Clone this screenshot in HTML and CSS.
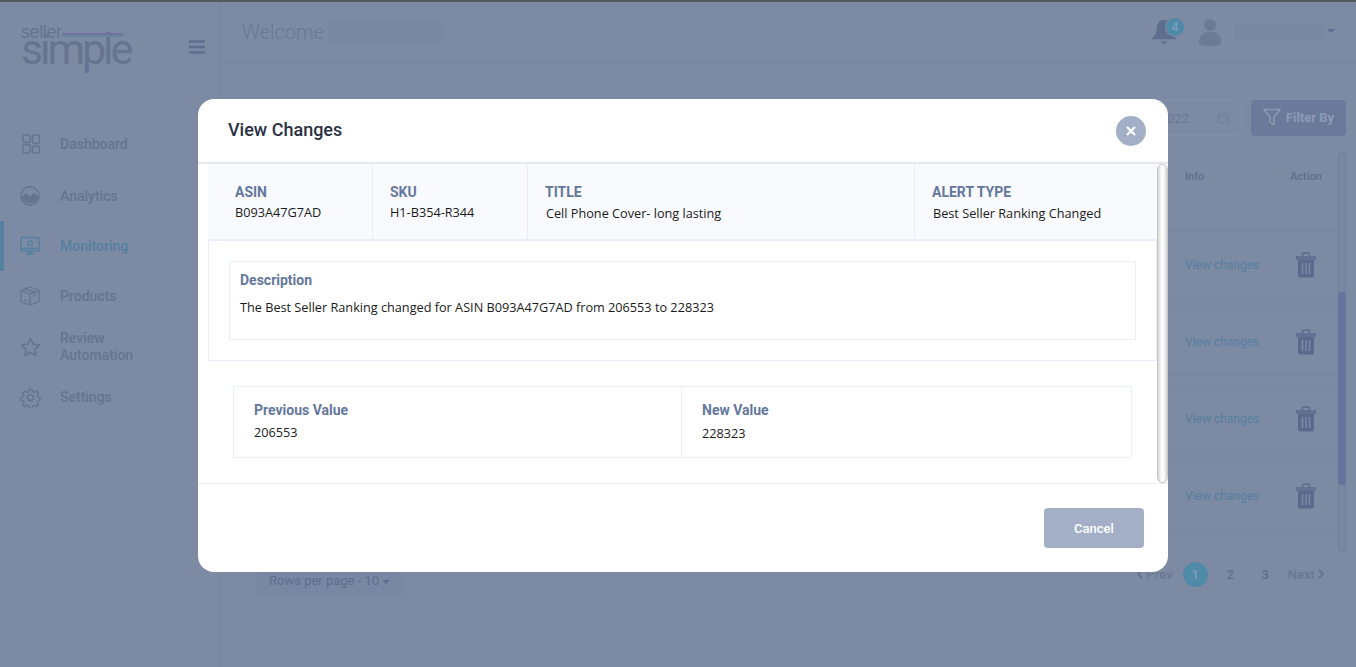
FILE: index.html
```html
<!DOCTYPE html>
<html lang="en">
<head>
<meta charset="utf-8">
<title>View Changes</title>
<link rel="stylesheet" href="styles.css">
</head>
<body>
<div class="app">
  <aside class="sidebar">
    <div class="brand">
      <div class="logo">
        <span class="logo-top">seller</span>
        <span class="logo-rule"></span>
        <span class="logo-main">simple</span>
      </div>
      <svg class="burger" width="16" height="14" viewBox="0 0 16 14"><path d="M0 1.500h16M0 7h16M0 12.500h16" stroke="#5f6d8e" stroke-width="2.400"/></svg>
    </div>
    <nav class="nav">
      <a class="nav-item nav-dash">
        <svg width="20" height="20" viewBox="0 0 20 20" fill="none" stroke="#66748f" stroke-width="1.500"><rect x="2.800" y="1" width="7.500" height="7.500" rx="2"/><rect x="12.500" y="1" width="7" height="8.500" rx="2"/><rect x="2.800" y="10.500" width="7.500" height="8.500" rx="2"/><rect x="12.500" y="12" width="7" height="7" rx="2"/></svg>
        <span>Dashboard</span>
      </a>
      <a class="nav-item nav-ana">
        <svg width="20" height="20" viewBox="0 0 20 20"><circle cx="10" cy="10" r="9.200" fill="none" stroke="#66748f" stroke-width="1.400"/><path d="M1.500 11c2-1 3-3.500 4.500-3.500S8.500 10.500 10 10.500s2.500-3.500 4-3.500 2.500 2.500 4.500 4A8.800 8.800 0 0 1 1.500 11z" fill="#66748f"/></svg>
        <span>Analytics</span>
      </a>
      <a class="nav-item nav-mon active">
        <svg width="20" height="20" viewBox="0 0 20 20" fill="none" stroke="#55809f" stroke-width="1.300"><rect x="0.700" y="1.500" width="18.600" height="13.500" rx="1"/><path d="M1 12.500h18" stroke-width="1.800"/><path d="M6 18h8" stroke-width="1.800"/><path d="M8.500 15.500h3v2h-3z" fill="#55809f"/><circle cx="10" cy="7" r="2.400"/></svg>
        <span>Monitoring</span>
      </a>
      <a class="nav-item nav-pro">
        <svg width="20" height="20" viewBox="0 0 20 20" fill="none" stroke="#66748f" stroke-width="1.300"><path d="M10 1l9 3.500v11L10 19l-9-3.500v-11z"/><path d="M1 4.500L10 8l9-3.500M10 8v11M5.500 2.800l9 3.500v4"/><path d="M4 14l2 .8"/></svg>
        <span>Products</span>
      </a>
      <a class="nav-item nav-rev">
        <svg width="21" height="21" viewBox="0 0 20 20" fill="none" stroke="#66748f" stroke-width="1.500" stroke-linejoin="round"><path d="M10 1.500l2.600 5.300 5.900.9-4.300 4.100 1 5.800-5.200-2.800-5.200 2.800 1-5.800L1.500 7.700l5.900-.9z"/></svg>
        <span>Review<br>Automation</span>
      </a>
      <a class="nav-item nav-set">
        <svg width="21" height="21" viewBox="0 0 24 24" fill="none" stroke="#66748f" stroke-width="1.700" stroke-linejoin="round"><circle cx="12" cy="12" r="3.500"/><path d="M10 1.500h4l.6 3.200 1.900.8 2.700-1.800 2.800 2.800-1.800 2.700.8 1.900 3 .6v4l-3 .6-.8 1.900 1.800 2.700-2.800 2.800-2.700-1.800-1.900.8-.6 3h-4l-.6-3-1.900-.8-2.700 1.800-2.800-2.800 1.800-2.700-.8-1.900-3-.6v-4l3-.6.8-1.900L2 6.500l2.800-2.800 2.700 1.800 1.900-.8z" transform="translate(1.200 1.200) scale(.9)"/></svg>
        <span>Settings</span>
      </a>
    </nav>
  </aside>

  <main class="main">
    <header class="topbar">
      <div class="welcome">Welcome <span class="blur blur-name"></span></div>
      <div class="top-right">
        <div class="bell">
          <svg width="24" height="25" viewBox="1.500 3 21 22"><path d="M12 3c-4.500 0-6.500 3.500-6.500 8 0 4-1.500 6-4 8v1h21v-1c-2.500-2-4-4-4-8 0-4.500-2-8-6.500-8z" fill="#5f6d8e"/><path d="M9 22h6l-3 2.500z" fill="#5f6d8e"/></svg>
          <span class="badge">4</span>
        </div>
        <svg class="avatar" width="24" height="28" viewBox="0 0 24 28"><circle cx="12" cy="7" r="6" fill="#6c7a96"/><path d="M1 24c0-7 4-10 11-10s11 3 11 10c0 3-4 4-11 4S1 27 1 24z" fill="#6c7a96"/></svg>
        <span class="blur blur-user"></span>
        <span class="caret"></span>
      </div>
    </header>

    <div class="content">
      <div class="toolbar">
        <div class="date">2022
          <svg width="12" height="12" viewBox="0 0 12 12" fill="none" stroke="#727f9c" stroke-width="1.100"><rect x="1" y="2" width="10" height="9" rx="1"/><path d="M1 5h10M3.500 0.500v2M8.500 0.500v2"/></svg>
        </div>
        <button class="filter">
          <svg width="18" height="18" viewBox="0 0 18 18" fill="none" stroke="#8d9ab3" stroke-width="1.300" stroke-linejoin="round"><path d="M0.800 1.500h16.400L11 9v7.500l-4-2.500V9z"/></svg>
          Filter By
        </button>
      </div>

      <div class="table-wrap">
        <div class="table">
          <div class="thead"><span class="col-info">Info</span><span class="col-action">Action</span></div>
          <div class="row"><a class="col-info link">View changes</a><span class="col-action"><svg class="trash" width="20" height="27" viewBox="0 0 20 27"><use href="#trash"/></svg></span></div>
          <div class="row"><a class="col-info link">View changes</a><span class="col-action"><svg class="trash" width="20" height="27" viewBox="0 0 20 27"><use href="#trash"/></svg></span></div>
          <div class="row"><a class="col-info link">View changes</a><span class="col-action"><svg class="trash" width="20" height="27" viewBox="0 0 20 27"><use href="#trash"/></svg></span></div>
          <div class="row"><a class="col-info link">View changes</a><span class="col-action"><svg class="trash" width="20" height="27" viewBox="0 0 20 27"><use href="#trash"/></svg></span></div>
        </div>
        <div class="main-scroll"><div class="main-thumb"></div></div>
      </div>

      <div class="pager-row">
        <div class="rows-per">Rows per page - 10 <span class="mini-caret"></span></div>
        <div class="pager">
          <span class="pg-text"><svg width="7" height="10" viewBox="0 0 7 10" fill="none" stroke="#66748f" stroke-width="2"><path d="M6 1L2 5l4 4"/></svg> Prev</span>
          <span class="pg pg-on">1</span>
          <span class="pg">2</span>
          <span class="pg">3</span>
          <span class="pg-text">Next <svg width="7" height="10" viewBox="0 0 7 10" fill="none" stroke="#66748f" stroke-width="2"><path d="M1 1l4 4-4 4"/></svg></span>
        </div>
      </div>
    </div>
  </main>
</div>

<svg class="defs" width="0" height="0" aria-hidden="true">
  <symbol id="trash" viewBox="0 0 20 27">
    <path d="M0 5h20v2H0zM6.500 5V2.500A1.500 1.500 0 0 1 8 1h4a1.500 1.500 0 0 1 1.500 1.500V5" fill="none" stroke="#5b6a8c" stroke-width="1.500"/>
    <path d="M2 8h16v15.500a2 2 0 0 1-2 2H4a2 2 0 0 1-2-2z" fill="#5b6a8c"/>
    <path d="M6.500 11v11M10 11v11M13.500 11v11" stroke="#7d8aa5" stroke-width="1.500"/>
  </symbol>
</svg>

<section class="modal">
  <div class="modal-head">
    <h2>View Changes</h2>
    <button class="close" aria-label="Close"><svg width="10" height="10" viewBox="0 0 10 10"><path d="M1 1l8 8M9 1l-8 8" stroke="#fff" stroke-width="2.200"/></svg></button>
  </div>
  <div class="modal-body">
    <div class="modal-scroll">
      <div class="info">
        <div class="cell c1"><b>ASIN</b><p>B093A47G7AD</p></div>
        <div class="cell c2"><b>SKU</b><p>H1-B354-R344</p></div>
        <div class="cell c3"><b>TITLE</b><p class="gap">Cell Phone Cover- long lasting</p></div>
        <div class="cell c4"><b>ALERT TYPE</b><p class="gap">Best Seller Ranking Changed</p></div>
      </div>
      <div class="desc-panel">
        <div class="desc">
          <b>Description</b>
          <p>The Best Seller Ranking changed for ASIN B093A47G7AD from 206553 to 228323</p>
        </div>
      </div>
      <div class="values">
        <div class="val val-prev"><b>Previous Value</b><p>206553</p></div>
        <div class="val val-new"><b>New Value</b><p>228323</p></div>
      </div>
    </div>
    <div class="modal-bar"></div>
  </div>
  <div class="modal-foot"><button class="cancel">Cancel</button></div>
</section>
</body>
</html>
```
FILE: styles.css
```css
* { box-sizing: border-box; }
html, body { margin: 0; height: 100%; overflow: hidden; }
body {
  background: #7c8aa4;
  border-top: 2px solid #555a60;
  font-family: Roboto, "Liberation Sans", sans-serif;
  color: #5f6d8e;
}
.defs { position: absolute; }
.app { display: flex; height: 665px; }

/* sidebar */
.sidebar { width: 221px; flex: none; border-right: 1px solid #77859f; }
.brand { display: flex; align-items: flex-start; justify-content: space-between; padding: 24px 15px 0 21px; height: 112px; }
.logo { position: relative; width: 112px; display: flex; flex-direction: column; color: #667490; }
.logo-top { font: 400 18px/12px "Liberation Sans", sans-serif; letter-spacing: -0.4px; height: 12px; }
.logo-rule { position: absolute; left: 41px; top: 7px; width: 61px; height: 4px; background: linear-gradient(#71709f 50%, #66869c 50%); }
.logo-main { font: 400 43px/32px Roboto, sans-serif; letter-spacing: -3.100px; height: 32px; margin-top: -5px; }
.burger { margin-top: 14px; }
.nav { display: flex; flex-direction: column; }
.nav-item { display: flex; align-items: center; gap: 20px; font-size: 14px; font-weight: 500; line-height: 17px; color: #66748f; border-left: 4px solid transparent; padding-left: 16px; }
.nav-dash { height: 36px; margin-top: 12px; }
.nav-ana { height: 36px; margin-top: 16px; }
.nav-mon { height: 50px; margin-top: 7px; }
.nav-pro { height: 36px; margin-top: 7px; }
.nav-rev { height: 36px; margin-top: 15px; }
.nav-set { height: 36px; margin-top: 14px; }
.nav-rev svg, .nav-set svg { margin-right: -1px; }
.active { color: #55809f; border-left-color: #55809f; }

/* main */
.main { flex: 1; min-width: 0; }
.topbar { height: 62px; display: flex; align-items: flex-start; justify-content: space-between; padding: 16px 21px 0 21px; border-bottom: 1px solid #7785a0; }
.welcome { font-size: 20px; line-height: 24px; margin-top: 2px; color: #6a7894; display: flex; align-items: center; gap: 5px; font-weight: 300; }
.blur { display: block; background: #7987a2; border-radius: 3px; }
.blur-name { width: 116px; height: 20px; }
.top-right { display: flex; align-items: flex-start; }
.bell { position: relative; width: 26px; height: 28px; margin-right: 20px; }
.bell svg { display: block; margin-top: 2px; }
.badge { position: absolute; left: 14px; top: 0; width: 18px; height: 18px; border-radius: 50%; background: #4f8aa8; box-shadow: 0 0 0 1px #7c8aa4; color: #7f9fb8; font-size: 12px; line-height: 18px; text-align: center; font-weight: 500; }
.avatar { margin-right: 12px; }
.blur-user { width: 90px; height: 18px; margin-right: 3px; margin-top: 5px; }
.caret { width: 0; height: 0; border: 4px solid transparent; border-top-color: #5f6d8e; margin-top: 11px; }
.content { padding: 0 10px 0 36px; }
.toolbar { display: flex; justify-content: flex-end; align-items: center; gap: 9px; margin-top: 36px; height: 36px; }
.date { width: 90px; height: 36px; border: 1px solid #8290aa; border-radius: 4px; display: flex; align-items: center; justify-content: flex-end; gap: 28px; padding-right: 12px; font-size: 13px; color: #6a7894; }
.filter { width: 95px; height: 36px; border: 0; border-radius: 4px; background: #6b7a9a; color: #8d9ab3; font: 700 13px Roboto, sans-serif; display: flex; align-items: center; justify-content: center; gap: 5px; padding: 0 0 2px; }
.table-wrap { position: relative; margin-top: 16px; height: 400px; }
.table { padding-right: 8px; }
.thead { height: 79px; display: flex; font-size: 11px; font-weight: 500; padding-top: 18px; color: #5f6d8e; }
.col-info { margin-left: 928px; width: 105px; }
.col-action { width: 32px; text-align: center; }
.row { height: 68px; margin-bottom: 9px; display: flex; align-items: center; border-top: 1px solid #7785a0; border-bottom: 1px solid #7785a0; font-size: 12px; }
.link { color: #55809f; line-height: 14px; }
.trash { display: block; margin: 0 auto; }
.main-scroll { position: absolute; right: 0; top: 0; width: 8px; height: 400px; border-radius: 4px; border: 1px solid #7280a0; background: #7987a2; }
.main-thumb { position: absolute; left: -1px; right: -1px; top: 139px; height: 193px; border-radius: 4px; background: #65749a; }
.pager-row { display: flex; justify-content: space-between; align-items: flex-start; margin-top: 10px; padding-right: 21px; }
.rows-per { font-size: 13px; background: #7987a2; height: 32px; line-height: 32px; padding: 0 12px; border-radius: 4px; color: #5f6d8e; margin-top: 3px; width: 146px; white-space: nowrap; }
.mini-caret { display: inline-block; width: 0; height: 0; border: 4px solid transparent; border-top-color: #5f6d8e; vertical-align: -3px; }
.pager { display: flex; align-items: center; gap: 10px; font-size: 13px; height: 25px; }
.pg { width: 25px; height: 25px; border-radius: 50%; border: 1px solid #7a88a3; display: flex; align-items: center; justify-content: center; font-weight: 500; }
.pg-on { background: #4f8aa8; border-color: #4f8aa8; color: #7f9fb8; }
.pg-text { color: #6a7894; font-weight: 500; white-space: nowrap; }

/* modal */
.modal { position: absolute; left: 198px; top: 99px; width: 970px; height: 473px; background: #fff; border-radius: 16px; display: flex; flex-direction: column; overflow: hidden; }
.modal-head { height: 65px; flex: none; display: flex; align-items: center; justify-content: space-between; padding: 0 22px 0 30px; border-bottom: 2px solid #e3e7ef; }
.modal-head h2 { margin: 0 0 2px; font-size: 18px; font-weight: 500; color: #2a3145; }
.close { width: 30px; height: 30px; border-radius: 50%; border: 0; background: #a2afc7; padding: 0; display: flex; align-items: center; justify-content: center; }
.modal-body { height: 320px; flex: none; display: flex; border-bottom: 1px solid #e5edf5; }
.modal-scroll { width: 959px; padding: 0 0 0 10px; }
.modal-bar { width: 11px; height: 319px; border-radius: 6px; background: linear-gradient(90deg, #d3d3d3, #fbfbfb 35%, #fbfbfb 65%, #d3d3d3); border: 1px solid #c6c6c6; }
.info { display: flex; height: 77px; background: #f9fafe; border-bottom: 2px solid #e9effa; }
.cell { padding: 20px 0 0 17px; border-right: 1px solid #e9effa; }
.c1 { width: 165px; padding-left: 27px; }
.c2 { width: 155px; }
.c3 { width: 387px; }
.c4 { flex: 1; border-right: 0; }
b { display: block; font-size: 14px; line-height: 16px; font-weight: 700; color: #64779c; }
p { margin: 0; font-family: "Open Sans", sans-serif; font-size: 12.700px; line-height: 17px; color: #1a1a1a; }
.cell p { margin-top: 4px; }
.cell p.gap { margin-top: 5px; margin-left: 1px; }
.desc-panel { height: 120px; padding: 20px 20px 0 20px; border: 1px solid #e9effa; border-top: 0; }
.desc { height: 79px; border: 1px solid #e9effa; padding: 10px 10px 0 10px; }
.desc p { margin-top: 11px; }
.values { display: flex; height: 72px; margin: 25px 25px 0 25px; border: 1px solid #e9effa; }
.val { padding: 15px 20px 0 20px; }
.val-prev { width: 447px; flex: none; }
.val-new { flex: 1; border-left: 1px solid #e9effa; }
.val p { margin-top: 6px; }
.val-new p { margin-top: 7px; }
.modal-foot { flex: 1; display: flex; justify-content: flex-end; align-items: flex-start; padding: 24px 24px 0 0; }
.cancel { width: 100px; height: 40px; border: 0; border-radius: 4px; background: #a2afc7; color: #fff; font: 500 13px Roboto, sans-serif; }
```
